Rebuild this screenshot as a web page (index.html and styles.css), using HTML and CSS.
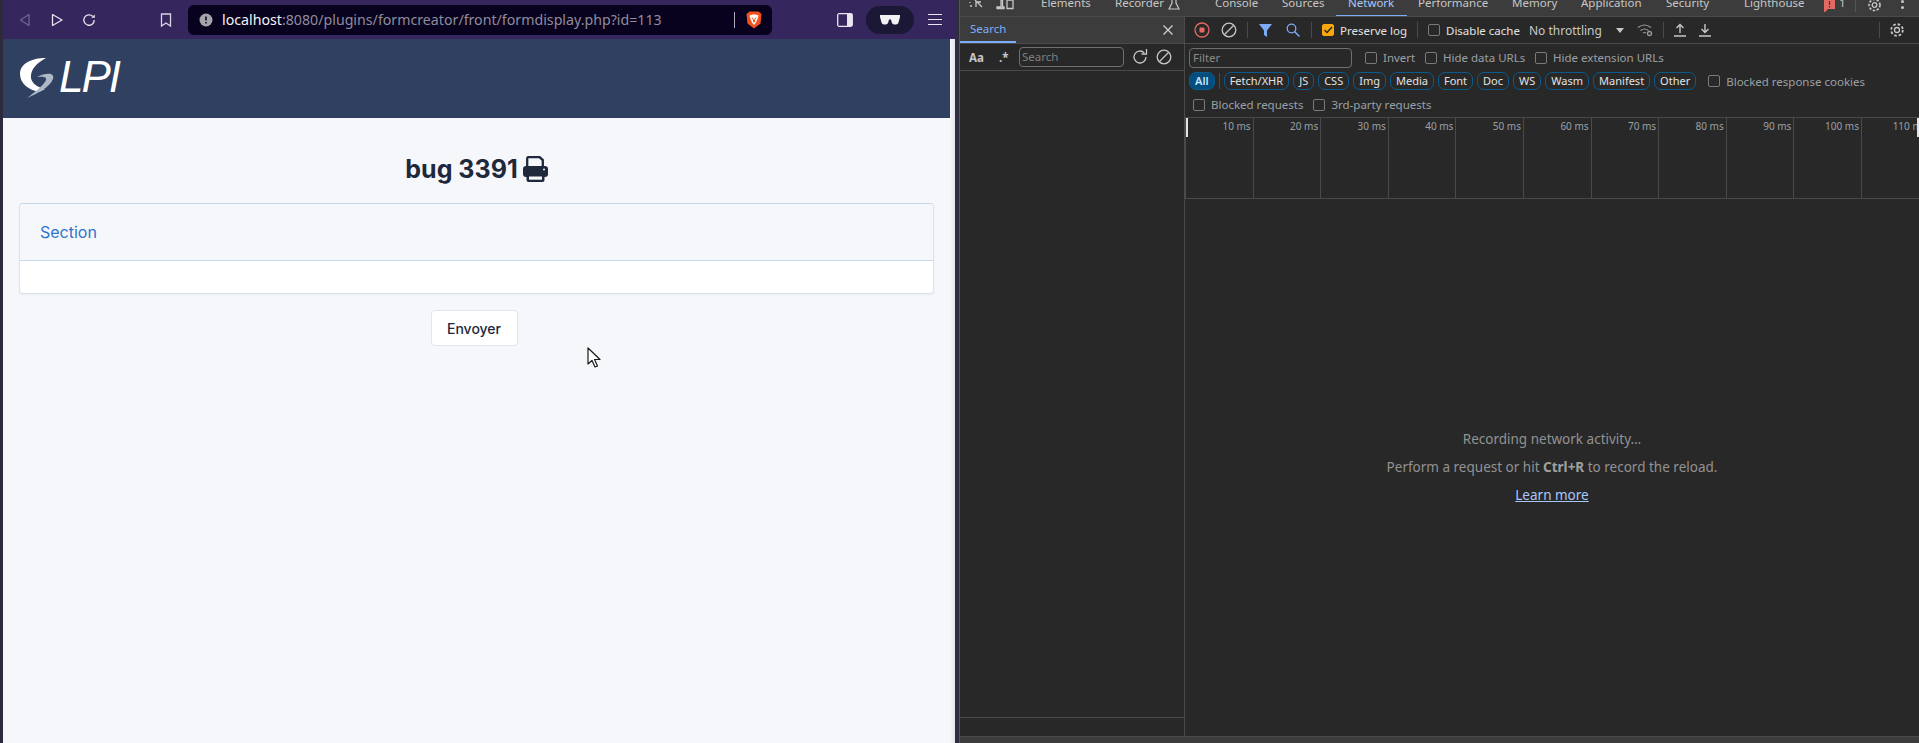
FILE: index.html
```html
<!DOCTYPE html>
<html lang="fr">
<head>
  <meta charset="UTF-8">
  <meta name="viewport" content="width=device-width, initial-scale=1.0">
  <title>GLPI - bug 3391</title>
  <link rel="stylesheet" href="styles.css">
</head>
<body>

<div class="desktop">
  <div class="edge-strip"></div>

  <!-- browser window -->
  <div class="browser">
    <div class="browser-bar">
      <svg class="nav-icon" width="16" height="16" viewBox="0 0 16 16"><path d="M12 2.500v11L3.500 8z" fill="none" stroke="#6f648f" stroke-width="1.300" stroke-linejoin="round"/></svg>
      <svg class="nav-icon" width="16" height="16" viewBox="0 0 16 16"><path d="M3.500 2.500v11L13 8z" fill="none" stroke="#e8e6f0" stroke-width="1.300" stroke-linejoin="round"/></svg>
      <svg class="nav-icon" width="16" height="16" viewBox="0 0 16 16"><path d="M13.200 8A5.200 5.200 0 1 1 11.600 4.300" fill="none" stroke="#e8e6f0" stroke-width="1.300"/><path d="M10.200 5.800h3.600V2.400z" fill="#e8e6f0"/></svg>
      <svg class="bookmark" width="14" height="16" viewBox="0 0 14 16"><path d="M2.500 2h9v12L7 11l-4.500 3z" fill="none" stroke="#d8d5e4" stroke-width="1.300"/></svg>
      <div class="address">
        <svg width="14" height="14" viewBox="0 0 14 14"><circle cx="7" cy="7" r="6.500" fill="#a6a5ad"/><path d="M7 3.500v4M7 9v1.500" stroke="#08021f" stroke-width="1.500"/></svg>
        <span class="url"><span class="url-host">localhost</span>:8080/plugins/formcreator/front/formdisplay.php?id=113</span>
        <span class="address-sep"></span>
        <svg width="16" height="18" viewBox="0 0 16 18"><path d="M3.500 .5h9L15.500 3l-1 9.500L8 17.500 1.500 12.500.5 3z" fill="#f0521e"/><path d="M3.500 4.500l3-1h3l3 1-1 3.500-1.500 3.500L8 14l-2-2.500L4.500 8z" fill="#fff"/><path d="M6 6.500l1.500 2.500v2h1V9L10 6.500" stroke="#f0521e" stroke-width="1" fill="none"/></svg>
      </div>
      <svg class="side-toggle" width="16" height="14" viewBox="0 0 16 14"><rect x=".7" y=".7" width="14.600" height="12.600" rx="1.500" fill="none" stroke="#e8e6f0" stroke-width="1.300"/><rect x="10" y="1" width="5" height="12" fill="#e8e6f0"/></svg>
      <div class="pill">
        <svg width="20" height="10" viewBox="0 0 20 10"><path d="M0 0h20v2l-1.500 5.500q-.5 2-2.500 2h-1.500q-2.500 0-3-3L11 4.500H9l-.5 2q-.5 3-3 3H4q-2 0-2.500-2L0 2z" fill="#f2f2f4"/></svg>
      </div>
      <div class="hamburger"><span></span><span></span><span></span></div>
    </div>

    <div class="page">
      <div class="page-main">
        <header class="glpi-header">
          <div class="glpi-logo">
            <svg width="38" height="42" viewBox="0 0 38 42"><path d="M27 1C12 1 1 7 1 17c0 10 9 16 19 18l6-3C16 30 11 24 12 18 13 10 20 5 27 1z" fill="#fff"/><path d="M8 41c10-4 23-11 26-19 2-6-6-7-16-2 6-1 10 0 9 3-2 5-11 12-19 18z" fill="#aeb8c6"/></svg>
            <span class="glpi-text">LPI</span>
          </div>
        </header>
        <main class="form-wrap">
          <h1 class="form-title">bug 3391
            <svg width="25" height="26" viewBox="0 0 25 26"><path d="M4.200 11V2.500a1.400 1.400 0 0 1 1.400-1.400h11l3.200 3V11" fill="none" stroke="#1e293b" stroke-width="2.300"/><rect y="10" width="25" height="11" rx="3" fill="#1e293b"/><circle cx="21" cy="13.500" r="1" fill="#f5f7fb"/><rect x="3.500" y="15" width="18" height="11" rx="2" fill="#1e293b"/><rect x="6" y="20.500" width="13" height="3.200" fill="#f5f7fb"/></svg>
          </h1>
          <section class="card">
            <div class="card-head">Section</div>
            <div class="card-body"></div>
          </section>
          <div class="actions"><button class="btn">Envoyer</button></div>
        </main>
      </div>
      <div class="page-scroll"></div>
      <svg class="cursor" width="15" height="21" viewBox="0 0 15 21"><path d="M1 1v16l4-3.500 3 6.500 2.500-1-3-6.500h5.500z" fill="#fff" stroke="#1a1a1a" stroke-width="1.200" stroke-linejoin="round"/></svg>
    </div>
  </div>

  <div class="gutter"></div>

  <!-- devtools -->
  <div class="devtools">
    <nav class="dt-tabs">
      <span class="dt-tab-icons">
        <svg width="14" height="16" viewBox="0 0 14 16"><path d="M1 5h2M1 9v1M1 13h2M5 5h2M6 7l7 7M7 14V9h5" stroke="#c7c7c7" stroke-width="1.300" fill="none" transform="translate(0 -7)"/></svg>
        <svg width="18" height="16" viewBox="0 0 18 16"><path d="M5 0v7H1v1.500h7V7H6.500V0zM11 0h6v8.500h-6z" fill="none" stroke="#c7c7c7" stroke-width="1.300"/></svg>
      </span>
      <span class="dt-tab">Elements</span>
      <span class="dt-tab">Recorder
        <svg width="12" height="14" viewBox="0 0 12 14"><path d="M4 0v6L1 12h10L8 6V0" fill="none" stroke="#c7c7c7" stroke-width="1.200"/></svg>
      </span>
      <span class="dt-tab">Console</span>
      <span class="dt-tab">Sources</span>
      <span class="dt-tab dt-tab-active">Network</span>
      <span class="dt-tab">Performance</span>
      <span class="dt-tab">Memory</span>
      <span class="dt-tab">Application</span>
      <span class="dt-tab">Security</span>
      <span class="dt-tab">Lighthouse</span>
      <span class="dt-tab dt-issues">
        <svg width="11" height="12" viewBox="0 0 11 12"><path d="M0 0h11v9H4l-3 3H0z" fill="#e46962"/><path d="M5.500 1v4M5.500 6v1.500" stroke="#3c3c3c" stroke-width="1.200"/></svg>
        1
      </span>
      <span class="dt-sep"></span>
      <svg class="dt-tab-gear" width="15" height="15" viewBox="0 0 15 15"><circle cx="7.500" cy="5" r="2.300" fill="none" stroke="#c7c7c7" stroke-width="1.300"/><circle cx="7.500" cy="5" r="5.500" fill="none" stroke="#c7c7c7" stroke-width="1.600" stroke-dasharray="2.400 1.500"/></svg>
      <span class="dt-dots"><i></i><i></i></span>
    </nav>

    <div class="dt-panels">
      <aside class="search-pane">
        <div class="search-head">
          <span class="search-tab">Search</span>
          <svg width="10" height="10" viewBox="0 0 10 10"><path d="M.5.5l9 9M9.500.5l-9 9" stroke="#d0d0d0" stroke-width="1.300"/></svg>
        </div>
        <div class="search-tools">
          <span class="search-case">Aa</span>
          <span class="search-regex">.*</span>
          <span class="search-input">Search</span>
          <svg width="16" height="16" viewBox="0 0 16 16"><path d="M14 8A6 6 0 1 1 12.200 3.700" fill="none" stroke="#c7c7c7" stroke-width="1.300"/><path d="M9.500 5h5V0" fill="none" stroke="#c7c7c7" stroke-width="1.300"/></svg>
          <svg width="16" height="16" viewBox="0 0 16 16"><circle cx="8" cy="8" r="6.800" fill="none" stroke="#c7c7c7" stroke-width="1.300"/><path d="M3.500 12.500l9-9" stroke="#c7c7c7" stroke-width="1.300"/></svg>
        </div>
        <div class="search-results"></div>
        <div class="search-foot"></div>
      </aside>

      <section class="network">
        <div class="net-toolbar">
          <svg width="16" height="16" viewBox="0 0 16 16"><circle cx="8" cy="8" r="7" fill="none" stroke="#e46962" stroke-width="1.300"/><rect x="5.500" y="5.500" width="5" height="5" rx="1" fill="#e46962"/></svg>
          <svg width="16" height="16" viewBox="0 0 16 16"><circle cx="8" cy="8" r="6.800" fill="none" stroke="#c7c7c7" stroke-width="1.300"/><path d="M3.500 12.500l9-9" stroke="#c7c7c7" stroke-width="1.300"/></svg>
          <span class="tool-sep"></span>
          <svg width="13" height="13" viewBox="0 0 13 13"><path d="M0 0h13L8 6.500V13L5 11V6.500z" fill="#7cacf8"/></svg>
          <svg width="14" height="14" viewBox="0 0 14 14"><circle cx="5.500" cy="5.500" r="4.300" fill="none" stroke="#7cacf8" stroke-width="1.300"/><path d="M8.500 8.500l5 5" stroke="#7cacf8" stroke-width="1.500"/></svg>
          <span class="tool-sep"></span>
          <label class="check check-bright"><span class="box box-on"><svg width="10" height="10" viewBox="0 0 10 10"><path d="M1.500 5l2.500 2.500 5-5.500" fill="none" stroke="#282828" stroke-width="1.500"/></svg></span>Preserve log</label>
          <span class="tool-sep"></span>
          <label class="check check-bright"><span class="box"></span>Disable cache</label>
          <span class="throttle">No throttling<i class="caret"></i></span>
          <svg width="16" height="14" viewBox="0 0 16 14"><path d="M1 4.500q6.500-5 13 0M3.500 7.500q4-3 8 0M6 10q1.500-1 3 0" fill="none" stroke="#9a9a9a" stroke-width="1.200"/><circle cx="12.500" cy="10.500" r="2" fill="none" stroke="#9a9a9a" stroke-width="1.300"/></svg>
          <span class="tool-sep"></span>
          <svg width="14" height="14" viewBox="0 0 14 14"><path d="M7 10V1.500M3.500 5L7 1.500 10.500 5M1 13h12" fill="none" stroke="#c7c7c7" stroke-width="1.400"/></svg>
          <svg width="14" height="14" viewBox="0 0 14 14"><path d="M7 1v8.500M3.500 6L7 9.500 10.500 6M1 13h12" fill="none" stroke="#c7c7c7" stroke-width="1.400"/></svg>
          <span></span>
          <span class="tool-sep"></span>
          <svg width="16" height="16" viewBox="0 0 16 16"><circle cx="8" cy="8" r="2.500" fill="none" stroke="#c7c7c7" stroke-width="1.300"/><circle cx="8" cy="8" r="5.800" fill="none" stroke="#c7c7c7" stroke-width="1.800" stroke-dasharray="2.600 1.950"/></svg>
        </div>

        <div class="filter-row">
          <span class="filter-input">Filter</span>
          <label class="check"><span class="box"></span>Invert</label>
          <label class="check"><span class="box"></span>Hide data URLs</label>
          <label class="check"><span class="box"></span>Hide extension URLs</label>
        </div>

        <div class="chip-row">
          <span class="chip chip-on">All</span>
          <span class="chip-sep"></span>
          <span class="chip">Fetch/XHR</span>
          <span class="chip">JS</span>
          <span class="chip">CSS</span>
          <span class="chip">Img</span>
          <span class="chip">Media</span>
          <span class="chip">Font</span>
          <span class="chip">Doc</span>
          <span class="chip">WS</span>
          <span class="chip">Wasm</span>
          <span class="chip">Manifest</span>
          <span class="chip">Other</span>
          <label class="check chip-check"><span class="box"></span>Blocked response cookies</label>
        </div>

        <div class="blocked-row">
          <label class="check"><span class="box"></span>Blocked requests</label>
          <label class="check"><span class="box"></span>3rd-party requests</label>
        </div>

        <div class="timeline">
          <span class="tick">10 ms</span>
          <span class="tick">20 ms</span>
          <span class="tick">30 ms</span>
          <span class="tick">40 ms</span>
          <span class="tick">50 ms</span>
          <span class="tick">60 ms</span>
          <span class="tick">70 ms</span>
          <span class="tick">80 ms</span>
          <span class="tick">90 ms</span>
          <span class="tick">100 ms</span>
          <span class="tick">110 ms</span>
          <i class="handle handle-left"></i>
          <i class="handle handle-right"></i>
        </div>

        <div class="net-empty">
          <p>Recording network activity…</p>
          <p>Perform a request or hit <b>Ctrl+R</b> to record the reload.</p>
          <p><a href="#" class="learn">Learn more</a></p>
        </div>
      </section>
    </div>
    <div class="dt-status"></div>
  </div>
</div>

</body>
</html>
```

FILE: styles.css
```css
html, body {
  margin: 0;
  padding: 0;
  height: 100%;
  overflow: hidden;
}
.desktop {
  display: flex;
  height: 743px;
  width: 1919px;
  font-family: "Noto Sans", sans-serif;
}
.edge-strip {
  width: 3px;
  background-color: #2c2a3c;
}

/* browser */
.browser {
  width: 952px;
  display: flex;
  flex-direction: column;
}
.browser-bar {
  height: 39px;
  background-color: #35265e;
  display: flex;
  align-items: center;
  padding-left: 14px;
  box-sizing: border-box;
}
.nav-icon {
  margin-right: 16px;
}
.bookmark {
  margin-left: 46px;
  margin-right: 15px;
}
.address {
  width: 584px;
  height: 30px;
  background-color: #08021f;
  border-radius: 6px;
  display: flex;
  align-items: center;
  padding: 0 10px 0 11px;
  box-sizing: border-box;
}
.url {
  font-size: 14.200px;
  color: #8f8c9c;
  margin-left: 9px;
  flex: 1;
  white-space: nowrap;
}
.url-host {
  color: #f2f2f4;
}
.address-sep {
  width: 1px;
  height: 16px;
  background-color: #aaa8b4;
  margin-right: 11px;
}
.side-toggle {
  margin-left: 65px;
}
.pill {
  width: 48px;
  height: 28px;
  margin-left: 13px;
  border-radius: 14px;
  background-color: #1b1836;
  display: flex;
  align-items: center;
  justify-content: center;
}
.hamburger {
  margin-left: 14px;
  width: 14px;
  display: flex;
  flex-direction: column;
  gap: 4px;
}
.hamburger span {
  height: 1px;
  background-color: #e8e6f0;
}

.page {
  flex: 1;
  display: flex;
  position: relative;
  background-color: #f5f7fb;
}
.page-main {
  width: 947px;
}
.page-scroll {
  flex: 1;
  background: linear-gradient(to right, #f5f7fb, #e3e4ea);
}
.glpi-header {
  height: 79px;
  background-color: #2f4060;
  display: flex;
  align-items: center;
  padding-left: 16px;
  box-sizing: border-box;
}
.glpi-logo {
  display: flex;
  align-items: flex-start;
  height: 44px;
}
.glpi-text {
  font-family: "Liberation Sans", Arial, sans-serif;
  font-style: italic;
  font-size: 44px;
  line-height: 40px;
  color: #fff;
  letter-spacing: -2px;
  margin-left: 2px;
}
.form-wrap {
  padding: 0 16px;
  font-family: Inter, sans-serif;
}
.form-title {
  margin: 0;
  height: 85px;
  padding: 16px 0 0;
  box-sizing: border-box;
  display: flex;
  align-items: center;
  justify-content: center;
  gap: 5px;
  font-size: 25px;
  font-weight: 700;
  color: #1e293b;
}
.card {
  background-color: #fff;
  border: 1px solid #dbe3ee;
  border-top-color: #c5d6e8;
  border-radius: 4px;
  box-shadow: 0 1px 2px rgba(0, 0, 0, 0.05);
}
.card-head {
  height: 57px;
  background-color: #f5f7fb;
  border-bottom: 1px solid #c5d9ec;
  border-radius: 4px 4px 0 0;
  padding-left: 20px;
  display: flex;
  align-items: center;
  font-size: 16px;
  color: #2f74cc;
  box-sizing: border-box;
}
.card-body {
  height: 32px;
}
.actions {
  display: flex;
  justify-content: center;
  margin-top: 16px;
  padding-right: 5px;
}
.btn {
  width: 87px;
  height: 36px;
  background-color: #fff;
  border: 1px solid #e2e6ee;
  border-radius: 4px;
  font-family: Inter, sans-serif;
  font-size: 14px;
  font-weight: 500;
  color: #1e293b;
}
.cursor {
  position: absolute;
  left: 584px;
  top: 308px;
}

.gutter {
  width: 5px;
  background-color: #2f2d40;
  border-right: 1px solid #55535f;
  box-sizing: border-box;
}

/* devtools */
.devtools {
  flex: 1;
  display: flex;
  flex-direction: column;
  background-color: #282828;
  font-size: 11.500px;
  color: #9aa0a6;
  min-width: 0;
}
.dt-tabs {
  height: 17px;
  flex: none;
  background-color: #3c3c3c;
  border-bottom: 1px solid #4a4a4a;
  box-sizing: border-box;
  display: grid;
  grid-template-columns: 81px 74px 100px 67px 66px 70px 94px 69px 85px 78px 80px 31px 12px 34px 1fr;
  overflow: hidden;
  color: #c7c7c7;
}
.dt-tab-icons {
  display: flex;
  gap: 13px;
  padding-left: 9px;
  align-items: flex-end;
}
.dt-tab {
  display: flex;
  gap: 4px;
  align-items: center;
  height: 16px;
  line-height: 16px;
  margin-top: -5px;
  position: relative;
  white-space: nowrap;
}
.dt-tab svg {
  margin-top: 2px;
}
.dt-tab-active {
  color: #a8c7fa;
}
.dt-tab-active::after {
  content: "";
  position: absolute;
  left: -12px;
  width: 71px;
  top: 20px;
  height: 2px;
  background-color: #7cacf8;
}
.dt-issues svg {
  margin-top: 5px;
}
.dt-sep {
  width: 1px;
  height: 12px;
  background-color: #555;
}
.dt-tab-gear {
  margin-top: 0;
}
.dt-dots {
  display: flex;
  flex-direction: column;
  gap: 3px;
  padding-left: 0;
}
.dt-dots i {
  width: 3px;
  height: 3px;
  border-radius: 50%;
  background-color: #c7c7c7;
}
.dt-panels {
  flex: 1;
  display: flex;
  min-height: 0;
}
.dt-status {
  height: 7px;
  background-color: #3c3c3c;
  border-top: 1px solid #4a4a4a;
  box-sizing: border-box;
}

.search-pane {
  width: 225px;
  border-right: 1px solid #4a4a4a;
  box-sizing: border-box;
  display: flex;
  flex-direction: column;
}
.search-head {
  height: 27px;
  background-color: #3c3c3c;
  border-bottom: 1px solid #4a4a4a;
  box-sizing: border-box;
  display: flex;
  align-items: center;
  justify-content: space-between;
  padding-right: 11px;
}
.search-tab {
  width: 56px;
  height: 26px;
  line-height: 24px;
  box-sizing: border-box;
  padding-left: 10px;
  color: #7cacf8;
  border-bottom: 2px solid #7cacf8;
}
.search-tools {
  height: 27px;
  border-bottom: 1px solid #4a4a4a;
  box-sizing: border-box;
  display: flex;
  align-items: center;
  padding-left: 9px;
}
.search-case {
  width: 20px;
  font-weight: 700;
  color: #c7c7c7;
}
.search-regex {
  width: 30px;
  font-weight: 700;
  color: #c7c7c7;
  padding-left: 10px;
  box-sizing: border-box;
}
.search-input {
  width: 105px;
  height: 20px;
  line-height: 18px;
  border: 1px solid #6f6f6f;
  border-radius: 4px;
  box-sizing: border-box;
  padding-left: 2px;
  color: #7f7f7f;
  margin-right: 8px;
}
.search-tools svg {
  margin-right: 8px;
}
.search-results {
  flex: 1;
  border-bottom: 1px solid #4a4a4a;
}
.search-foot {
  height: 18px;
}

.network {
  flex: 1;
  display: flex;
  flex-direction: column;
  min-width: 0;
}
.net-toolbar {
  height: 27px;
  border-bottom: 1px solid #4a4a4a;
  box-sizing: border-box;
  padding: 0 8px 0 3px;
  display: grid;
  grid-template-columns: 27px 28px 8px 28px 28px 8px 98px 8px 104px 106px 28px 8px 26px 24px 1fr 8px 28px;
  align-items: center;
  justify-items: center;
}
.tool-sep {
  width: 1px;
  height: 16px;
  background-color: #4a4a4a;
}
.check {
  display: flex;
  align-items: center;
  gap: 6px;
  white-space: nowrap;
}
.net-toolbar .check {
  justify-self: start;
  padding-left: 7px;
}
.check-bright {
  color: #e3e3e3;
}
.box {
  width: 12px;
  height: 12px;
  flex: none;
  border: 1px solid #7a7a7a;
  border-radius: 2px;
  box-sizing: border-box;
  display: flex;
  align-items: center;
  justify-content: center;
}
.box-on {
  background-color: #f8a70c;
  border-color: #f8a70c;
}
.throttle {
  justify-self: start;
  padding-left: 4px;
  font-size: 12px;
  color: #c7c7c7;
  display: flex;
  align-items: center;
  white-space: nowrap;
}
.caret {
  width: 0;
  height: 0;
  margin-left: 14px;
  border: 4px solid transparent;
  border-top: 5px solid #c7c7c7;
  border-bottom: 0;
}
.filter-row {
  height: 27px;
  display: grid;
  grid-template-columns: 163px 60px 110px 1fr;
  padding-left: 4px;
  align-items: center;
}
.filter-row .check {
  padding-left: 13px;
}
.filter-input {
  height: 20px;
  line-height: 18px;
  border: 1px solid #6f6f6f;
  border-radius: 4px;
  box-sizing: border-box;
  padding-left: 3px;
  color: #8a8a8a;
}
.chip-row {
  height: 20px;
  display: flex;
  align-items: center;
  gap: 4px;
  padding-left: 4px;
}
.chip {
  height: 18px;
  line-height: 15px;
  padding: 0 5px;
  box-sizing: border-box;
  border: 1px solid #0a5a8c;
  border-radius: 7px;
  font-size: 11px;
  color: #e3e3e3;
  white-space: nowrap;
}
.chip-on {
  background-color: #054d7c;
  padding: 0 5px;
  font-weight: 600;
  color: #c2e7ff;
}
.chip-sep {
  width: 1px;
  height: 16px;
  background-color: #4a4a4a;
}
.chip-check {
  margin-left: 8px;
}
.blocked-row {
  height: 26px;
  padding-top: 1px;
  box-sizing: border-box;
  display: flex;
  align-items: center;
  gap: 10px;
  padding-left: 8px;
}
.timeline {
  height: 82px;
  display: grid;
  grid-template-columns: repeat(11, 67.600px);
  border-top: 1px solid #4a4a4a;
  border-bottom: 1px solid #4a4a4a;
  box-sizing: border-box;
  border-left: 1px solid #4a4a4a;
  position: relative;
  overflow: hidden;
}
.tick {
  border-right: 1px solid #4a4a4a;
  box-sizing: border-box;
  text-align: right;
  padding: 1px 2px 0 0;
  font-size: 10px;
  color: #9aa0a6;
  white-space: nowrap;
}
.handle {
  position: absolute;
  top: 0;
  width: 2px;
  height: 19px;
  background-color: #e3e3e3;
}
.handle-left {
  left: 0;
}
.handle-right {
  right: 0;
}
.net-empty {
  flex: 1;
  display: flex;
  flex-direction: column;
  align-items: center;
  justify-content: center;
  gap: 8px;
  font-size: 13.500px;
  color: #929292;
  padding-bottom: 2px;
}
.net-empty p {
  margin: 0;
  line-height: 20px;
}
.net-empty b {
  color: #a0a0a0;
}
.learn {
  color: #a8c7fa;
}
```
